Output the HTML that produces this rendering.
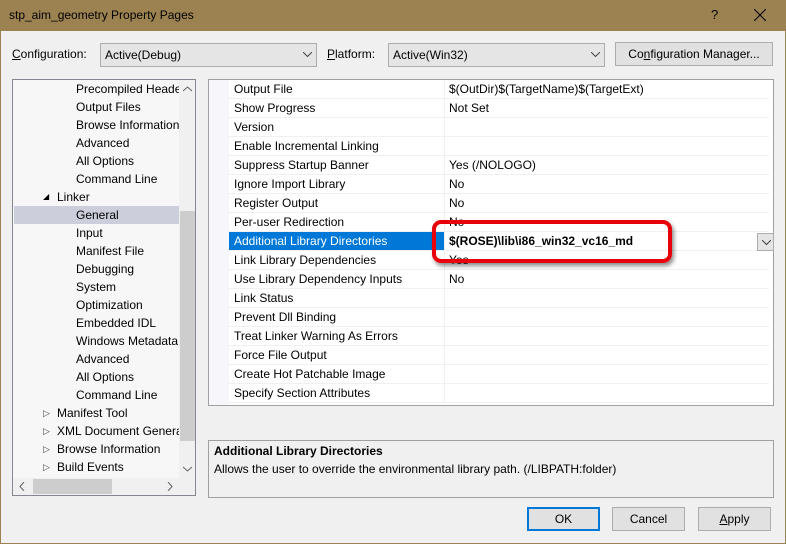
<!DOCTYPE html><html><head><style>
*{margin:0;padding:0;box-sizing:border-box}
body{width:786px;height:544px;background:#f0f0f0;font-family:"Liberation Sans",sans-serif;font-size:12px;color:#000;position:relative;overflow:hidden}
.a{position:absolute;white-space:nowrap}
#frame{position:absolute;left:0;top:0;width:786px;height:544px;border:1px solid #9b8250;pointer-events:none}
#title{position:absolute;left:0;top:0;width:786px;height:31px;background:#9b8250;color:#000}
.combo{position:absolute;height:24px;border:1px solid #adadad;background:#e5e5e5}
.btn{position:absolute;height:24px;border:1px solid #adadad;background:#e1e1e1;text-align:center;line-height:22px}
.tree{position:absolute;left:12px;top:79px;width:184px;height:417px;border:1px solid #828790;background:#f7f7f7;overflow:hidden}
.ti{position:absolute;height:18px;line-height:18px}
.grid{position:absolute;left:208px;top:79px;width:566px;height:327px;border:1px solid #a0a0a0;background:#fff}
.row{position:absolute;left:20px;width:540px;height:19px;border-bottom:1px solid #f0f0f0;line-height:19px}
.row .n{position:absolute;left:5px}
.row .v{position:absolute;left:220px}
</style></head><body>
<div id="title"><span class="a" style="left:9px;top:8px;font-size:12px">stp_aim_geometry Property Pages</span>
<span class="a" style="left:711px;top:7px;font-size:13px">?</span>
<svg class="a" style="left:754px;top:9px" width="12" height="12"><path d="M0 0L12 12M12 0L0 12" stroke="#000" stroke-width="1.1"/></svg></div>
<span class="a" style="left:12px;top:47px"><u>C</u>onfiguration:</span>
<div class="combo" style="left:100px;top:43px;width:217px"><span class="a" style="left:4px;top:4px">Active(Debug)</span>
<svg class="a" style="left:202px;top:8px" width="9" height="6"><path d="M0 0L4.5 4.5L9 0" stroke="#444" fill="none"/></svg></div>
<span class="a" style="left:327px;top:47px"><u>P</u>latform:</span>
<div class="combo" style="left:388px;top:43px;width:217px"><span class="a" style="left:4px;top:4px">Active(Win32)</span>
<svg class="a" style="left:202px;top:8px" width="9" height="6"><path d="M0 0L4.5 4.5L9 0" stroke="#444" fill="none"/></svg></div>
<div class="btn" style="left:615px;top:42px;width:158px">Co<u>n</u>figuration Manager...</div>

<div class="tree">
<div class="ti" style="left:63px;top:0">Precompiled Heade</div>
<div class="ti" style="left:63px;top:18px">Output Files</div>
<div class="ti" style="left:63px;top:36px">Browse Information</div>
<div class="ti" style="left:63px;top:54px">Advanced</div>
<div class="ti" style="left:63px;top:72px">All Options</div>
<div class="ti" style="left:63px;top:90px">Command Line</div>
<div class="ti" style="left:30px;top:108px;font-size:8px">&#9698;</div>
<div class="ti" style="left:44px;top:108px">Linker</div>
<div class="ti" style="left:1px;top:126px;width:165px;background:#cccedb"></div>
<div class="ti" style="left:63px;top:126px">General</div>
<div class="ti" style="left:63px;top:144px">Input</div>
<div class="ti" style="left:63px;top:162px">Manifest File</div>
<div class="ti" style="left:63px;top:180px">Debugging</div>
<div class="ti" style="left:63px;top:198px">System</div>
<div class="ti" style="left:63px;top:216px">Optimization</div>
<div class="ti" style="left:63px;top:234px">Embedded IDL</div>
<div class="ti" style="left:63px;top:252px">Windows Metadata</div>
<div class="ti" style="left:63px;top:270px">Advanced</div>
<div class="ti" style="left:63px;top:288px">All Options</div>
<div class="ti" style="left:63px;top:306px">Command Line</div>
<div class="ti" style="left:30px;top:324px;font-size:9px;color:#444">&#9655;</div><div class="ti" style="left:44px;top:324px">Manifest Tool</div>
<div class="ti" style="left:30px;top:342px;font-size:9px;color:#444">&#9655;</div><div class="ti" style="left:44px;top:342px">XML Document Genera</div>
<div class="ti" style="left:30px;top:360px;font-size:9px;color:#444">&#9655;</div><div class="ti" style="left:44px;top:360px">Browse Information</div>
<div class="ti" style="left:30px;top:378px;font-size:9px;color:#444">&#9655;</div><div class="ti" style="left:44px;top:378px">Build Events</div>
<div class="a" style="left:166px;top:0;width:17px;height:398px;background:#f0f0f0"></div>
<div class="a" style="left:167px;top:131px;width:15px;height:230px;background:#cdcdcd"></div>
<svg class="a" style="left:170px;top:6px" width="9" height="6"><path d="M0 5L4.5 1L9 5" stroke="#606060" fill="none"/></svg>
<svg class="a" style="left:170px;top:386px" width="9" height="6"><path d="M0 1L4.5 5L9 1" stroke="#606060" fill="none"/></svg>
<div class="a" style="left:0;top:398px;width:183px;height:17px;background:#f0f0f0"></div>
<div class="a" style="left:20px;top:399px;width:79px;height:15px;background:#cdcdcd"></div>
<svg class="a" style="left:6px;top:402px" width="6" height="9"><path d="M5 0L1 4.5L5 9" stroke="#606060" fill="none"/></svg>
<svg class="a" style="left:154px;top:402px" width="6" height="9"><path d="M1 0L5 4.5L1 9" stroke="#606060" fill="none"/></svg>
</div>

<div class="grid">
<div class="a" style="left:0;top:0;width:20px;height:325px;background:#f7f7fb"></div>
<div class="a" style="left:235px;top:0;width:1px;height:323px;background:#f0f0f0"></div>
<div class="row" style="top:0"><span class="n">Output File</span><span class="v">$(OutDir)$(TargetName)$(TargetExt)</span></div>
<div class="row" style="top:19px"><span class="n">Show Progress</span><span class="v">Not Set</span></div>
<div class="row" style="top:38px"><span class="n">Version</span></div>
<div class="row" style="top:57px"><span class="n">Enable Incremental Linking</span></div>
<div class="row" style="top:76px"><span class="n">Suppress Startup Banner</span><span class="v">Yes (/NOLOGO)</span></div>
<div class="row" style="top:95px"><span class="n">Ignore Import Library</span><span class="v">No</span></div>
<div class="row" style="top:114px"><span class="n">Register Output</span><span class="v">No</span></div>
<div class="row" style="top:133px"><span class="n">Per-user Redirection</span><span class="v">No</span></div>
<div class="row" style="top:152px"><span class="a" style="left:0;top:0;width:215px;height:18px;background:#0078d7"></span><span class="n" style="color:#fff">Additional Library Directories</span><span class="v" style="font-weight:bold">$(ROSE)\lib\i86_win32_vc16_md</span></div>
<div class="row" style="top:171px"><span class="n">Link Library Dependencies</span><span class="v">Yes</span></div>
<div class="row" style="top:190px"><span class="n">Use Library Dependency Inputs</span><span class="v">No</span></div>
<div class="row" style="top:209px"><span class="n">Link Status</span></div>
<div class="row" style="top:228px"><span class="n">Prevent Dll Binding</span></div>
<div class="row" style="top:247px"><span class="n">Treat Linker Warning As Errors</span></div>
<div class="row" style="top:266px"><span class="n">Force File Output</span></div>
<div class="row" style="top:285px"><span class="n">Create Hot Patchable Image</span></div>
<div class="row" style="top:304px"><span class="n">Specify Section Attributes</span></div>
<div class="a" style="left:548px;top:153px;width:17px;height:18px;border:1px solid #adadad;background:#e5e5e5"></div>
<svg class="a" style="left:553px;top:160px" width="9" height="6"><path d="M0 0L4.5 4.5L9 0" stroke="#444" fill="none"/></svg>
</div>
<div class="a" style="left:432px;top:220px;width:240px;height:43px;border:4px solid #e8000b;border-radius:9px;box-shadow:2px 3px 4px rgba(0,0,0,.45)"></div>

<div class="a" style="left:208px;top:440px;width:566px;height:58px;border:1px solid #a0a0a0;background:#f0f0f0"></div>
<span class="a" style="left:214px;top:444px;font-weight:bold">Additional Library Directories</span>
<span class="a" style="left:214px;top:462px">Allows the user to override the environmental library path. (/LIBPATH:folder)</span>

<div class="btn" style="left:527px;top:507px;width:73px;border:2px solid #0078d7;line-height:20px">OK</div>
<div class="btn" style="left:612px;top:507px;width:73px">Cancel</div>
<div class="btn" style="left:698px;top:507px;width:73px"><u>A</u>pply</div>
<div id="frame"></div>
</body></html>
